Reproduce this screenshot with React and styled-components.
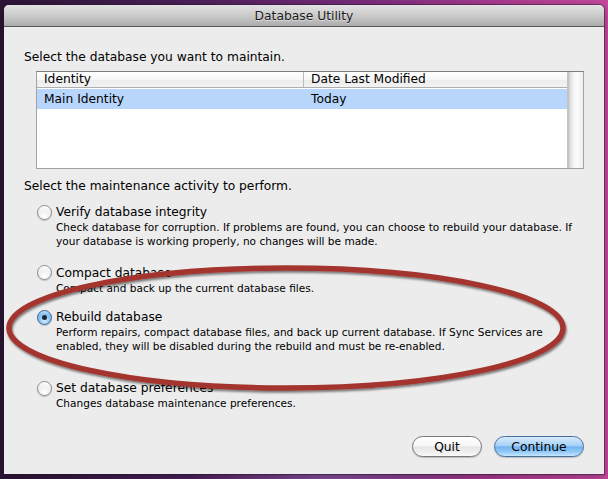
import React from 'react';
import styled, { createGlobalStyle } from 'styled-components';

const Global = createGlobalStyle`
  html, body { margin: 0; padding: 0; }
  body {
    width: 608px;
    height: 479px;
    overflow: hidden;
    font-family: "DejaVu Sans", "Liberation Sans", sans-serif;
    color: #000;
  }
`;

const Desktop = styled.div`
  position: relative;
  width: 608px;
  height: 479px;
  box-sizing: border-box;
  padding: 5px 4px 5px 4px;
  background:
    radial-gradient(ellipse 140px 40px at 330px 476px, rgba(150, 110, 190, 0.55), transparent),
    linear-gradient(90deg, #2c1536 0%, #4a2058 30%, #7a2c7c 60%, #b03e92 85%, #c4499c 100%);
`;

const Window = styled.div`
  height: 100%;
  display: flex;
  flex-direction: column;
  background: #ececec;
  border-radius: 5px 5px 0 0;
  box-shadow: 0 0 0 1px rgba(40, 20, 50, 0.45), 0 2px 8px rgba(0, 0, 0, 0.35);
  overflow: hidden;
`;

const TitleBar = styled.div`
  height: 21px;
  flex: none;
  display: flex;
  align-items: center;
  justify-content: center;
  border-bottom: 1px solid #575757;
  background: linear-gradient(#e2e2e2 0%, #d0d0d0 40%, #bcbcbc 75%, #ababab 100%);
  font-size: 12.3px;
  color: #1c1c1c;
  text-shadow: 0 1px 0 rgba(255, 255, 255, 0.45);
`;

const Content = styled.div`
  flex: 1;
  display: flex;
  flex-direction: column;
  padding: 0 20px;
`;

const Prompt = styled.div`
  font-size: 12.25px;
  line-height: 16px;
  margin-top: ${p => p.$top}px;
  white-space: nowrap;
`;

const Table = styled.div`
  margin: 6px 0 0 12px;
  height: 98px;
  box-sizing: border-box;
  display: flex;
  border: 1px solid #a2a2a2;
  border-top-color: #7c7c7c;
  background: #fff;
`;

const Grid = styled.div`
  flex: 1;
  display: flex;
  flex-direction: column;
`;

const HeaderRow = styled.div`
  height: 15px;
  display: flex;
  border-bottom: 1px solid #aeaeae;
  margin-bottom: 1px;
  background: linear-gradient(#ffffff 0%, #f6f6f6 50%, #ececec 51%, #f2f2f2 100%);
`;

const HeaderCell = styled.div`
  width: ${p => (p.$w ? `${p.$w}px` : 'auto')};
  flex: ${p => (p.$w ? 'none' : '1')};
  box-sizing: border-box;
  padding-left: 7px;
  font-size: 12.25px;
  line-height: 15px;
  border-right: ${p => (p.$w ? '1px solid #b9b9b9' : 'none')};
  white-space: nowrap;
`;

const DataRow = styled.div`
  height: 20px;
  display: flex;
  align-items: center;
  background: ${p => (p.$selected ? '#b8d6fc' : 'transparent')};
`;

const DataCell = styled.div`
  width: ${p => (p.$w ? `${p.$w}px` : 'auto')};
  flex: ${p => (p.$w ? 'none' : '1')};
  box-sizing: border-box;
  padding-left: 7px;
  font-size: 12.25px;
  white-space: nowrap;
`;

const ScrollTrack = styled.div`
  width: 15px;
  flex: none;
  background: linear-gradient(90deg, #bdbdbd 0%, #dedede 15%, #f7f7f7 40%, #fbfbfb 60%, #eeeeee 100%);
  border-left: 1px solid #c4c4c4;
`;

const Options = styled.div`
  display: flex;
  flex-direction: column;
  margin-left: 13px;
`;

const Option = styled.div`
  margin-top: ${p => p.$top}px;
`;

const OptionLabel = styled.div`
  display: flex;
  align-items: center;
  gap: 4px;
  height: 16px;
  font-size: 12.25px;
  white-space: nowrap;
`;

const Radio = styled.span`
  width: 15px;
  height: 15px;
  flex: none;
  box-sizing: border-box;
  border-radius: 50%;
  display: flex;
  align-items: center;
  justify-content: center;
  border: 1px solid ${p => (p.$on ? '#3f6695' : '#8c8c8c')};
  background: ${p =>
    p.$on
      ? 'radial-gradient(circle at 50% 75%, #d4ecff 0%, #8cc4f4 45%, transparent 70%), linear-gradient(#b8dbf9 0%, #6aaeec 50%, #4f9be6 55%, #a8d6fb 100%)'
      : 'radial-gradient(circle at 50% 80%, #ffffff 0%, #f3f3f3 40%, transparent 70%), linear-gradient(#ffffff 0%, #ececec 50%, #d9d9d9 60%, #f5f5f5 100%)'};
  box-shadow: 0 1px 1px rgba(0, 0, 0, 0.18);
`;

const Dot = styled.span`
  width: 5px;
  height: 5px;
  border-radius: 50%;
  background: #1c2733;
`;

const Desc = styled.div`
  margin: 1px 0 0 19px;
  font-size: 10.55px;
  line-height: 13px;
  white-space: nowrap;
`;

const ButtonRow = styled.div`
  display: flex;
  justify-content: flex-end;
  gap: 12px;
  margin-top: 26px;
`;

const Button = styled.button`
  width: ${p => p.$w}px;
  height: 21px;
  box-sizing: border-box;
  padding: 0;
  border-radius: 11px;
  font-family: "DejaVu Sans", "Liberation Sans", sans-serif;
  font-size: 12.3px;
  color: #000;
  border: 1px solid ${p => (p.$primary ? '#4a6f9f' : '#777777')};
  background: ${p =>
    p.$primary
      ? 'linear-gradient(#d6ebfc 0%, #a6d1f6 45%, #74b5f0 52%, #8cc6f6 75%, #c6e7ff 100%)'
      : 'linear-gradient(#ffffff 0%, #f7f7f7 45%, #e6e6e6 52%, #ededed 75%, #fafafa 100%)'};
  box-shadow: 0 1px 1px rgba(0, 0, 0, 0.2);
`;

const Annotation = styled.svg`
  position: absolute;
  left: 0;
  top: 0;
  width: 608px;
  height: 479px;
  pointer-events: none;
`;

const options = [
  {
    title: 'Verify database integrity',
    top: 10,
    lines: [
      'Check database for corruption. If problems are found, you can choose to rebuild your database. If',
      'your database is working properly, no changes will be made.',
    ],
  },
  { title: 'Compact database', top: 16.5, lines: ['Compact and back up the current database files.'] },
  {
    title: 'Rebuild database',
    top: 14.5,
    on: true,
    lines: [
      'Perform repairs, compact database files, and back up current database. If Sync Services are',
      'enabled, they will be disabled during the rebuild and must be re-enabled.',
    ],
  },
  { title: 'Set database preferences', top: 27, lines: ['Changes database maintenance preferences.'] },
];

export default function App() {
  return (
    <Desktop>
      <Global />
      <Window>
        <TitleBar>Database Utility</TitleBar>
        <Content>
          <Prompt $top={22}>Select the database you want to maintain.</Prompt>
          <Table>
            <Grid>
              <HeaderRow>
                <HeaderCell $w={267}>Identity</HeaderCell>
                <HeaderCell>Date Last Modified</HeaderCell>
              </HeaderRow>
              <DataRow $selected>
                <DataCell $w={267}>Main Identity</DataCell>
                <DataCell>Today</DataCell>
              </DataRow>
            </Grid>
            <ScrollTrack />
          </Table>
          <Prompt $top={9}>Select the maintenance activity to perform.</Prompt>
          <Options>
            {options.map(o => (
              <Option key={o.title} $top={o.top}>
                <OptionLabel>
                  <Radio $on={o.on}>{o.on && <Dot />}</Radio>
                  {o.title}
                </OptionLabel>
                {o.lines.map(l => (
                  <Desc key={l}>{l}</Desc>
                ))}
              </Option>
            ))}
          </Options>
          <ButtonRow>
            <Button $w={70}>Quit</Button>
            <Button $w={90} $primary>Continue</Button>
          </ButtonRow>
        </Content>
      </Window>
      <Annotation viewBox="0 0 608 479">
        <defs>
          <filter id="shadow" x="-10%" y="-30%" width="120%" height="160%">
            <feDropShadow dx="1" dy="2" stdDeviation="1.3" floodColor="#000" floodOpacity="0.5" />
          </filter>
        </defs>
        <ellipse
          cx="286"
          cy="328"
          rx="277"
          ry="60"
          fill="none"
          stroke="#a3352f"
          strokeWidth="5.5"
          filter="url(#shadow)"
        />
      </Annotation>
    </Desktop>
  );
}
